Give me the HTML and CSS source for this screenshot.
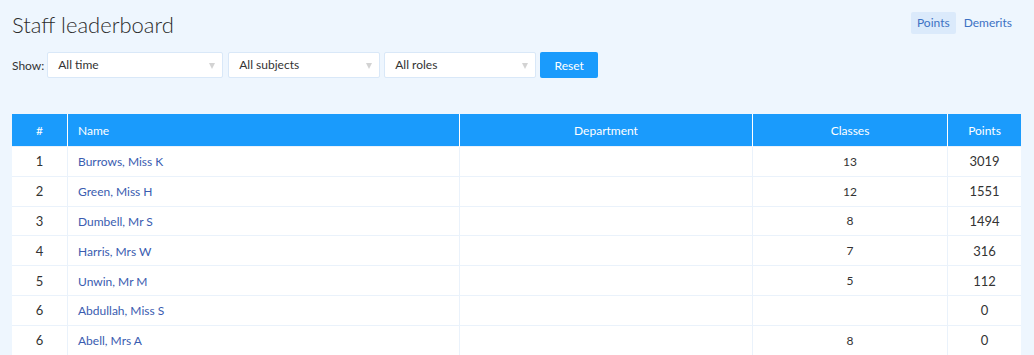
FILE: index.html
```html
<!DOCTYPE html>
<html>
  <head>
    <meta charset="utf-8" />
    <title>Staff leaderboard</title>
    <link rel="stylesheet" href="styles.css">
  </head>
  <body>
    <div class="page">
      <div class="top">
        <h1>Staff leaderboard</h1>
        <div class="tabs">
          <a class="tab active">Points</a>
          <a class="tab">Demerits</a>
        </div>
      </div>

      <div class="filters">
        <span class="show">Show:</span>
        <div class="select s1">All time<span class="arrow"></span></div>
        <div class="select s2">All subjects<span class="arrow"></span></div>
        <div class="select s3">All roles<span class="arrow"></span></div>
        <button class="reset">Reset</button>
      </div>

      <table class="board">
        <thead>
          <tr>
            <th class="c-rank">#</th>
            <th class="c-name">Name</th>
            <th class="c-dept">Department</th>
            <th class="c-classes">Classes</th>
            <th class="c-points">Points</th>
          </tr>
        </thead>
        <tbody>
          <tr><td class="c-rank">1</td><td class="c-name"><a>Burrows, Miss K</a></td><td></td><td class="c-classes">13</td><td class="c-points">3019</td></tr>
          <tr><td class="c-rank">2</td><td class="c-name"><a>Green, Miss H</a></td><td></td><td class="c-classes">12</td><td class="c-points">1551</td></tr>
          <tr><td class="c-rank">3</td><td class="c-name"><a>Dumbell, Mr S</a></td><td></td><td class="c-classes">8</td><td class="c-points">1494</td></tr>
          <tr><td class="c-rank">4</td><td class="c-name"><a>Harris, Mrs W</a></td><td></td><td class="c-classes">7</td><td class="c-points">316</td></tr>
          <tr><td class="c-rank">5</td><td class="c-name"><a>Unwin, Mr M</a></td><td></td><td class="c-classes">5</td><td class="c-points">112</td></tr>
          <tr><td class="c-rank">6</td><td class="c-name"><a>Abdullah, Miss S</a></td><td></td><td class="c-classes"></td><td class="c-points">0</td></tr>
          <tr><td class="c-rank">6</td><td class="c-name"><a>Abell, Mrs A</a></td><td></td><td class="c-classes">8</td><td class="c-points">0</td></tr>
        </tbody>
      </table>
    </div>
  </body>
</html>
```

FILE: styles.css
```css
html,
body {
  margin: 0;
  background: #eef6fe;
  font-family: Lato, "Open Sans", sans-serif;
  color: #333;
}

.page {
  padding: 12px 13px 0 12px;
}

.top {
  display: flex;
  justify-content: space-between;
  align-items: flex-start;
}

h1 {
  margin: 0;
  font-size: 22px;
  font-weight: 300;
  line-height: 26px;
  color: #2b2b2b;
}

.tabs {
  display: flex;
  gap: 2px;
  margin-right: 3px;
}

.tab {
  font-size: 12px;
  color: #3d72c4;
  padding: 4px 6px;
  line-height: 14px;
  border-radius: 2px;
}

.tab.active {
  background: #dbeafb;
}

.filters {
  display: flex;
  align-items: center;
  margin-top: 14px;
  gap: 6px;
}

.show {
  font-size: 12px;
  margin-right: -3px;
}

.select {
  position: relative;
  box-sizing: border-box;
  height: 26px;
  line-height: 24px;
  padding: 0 10px;
  background: #fff;
  border: 1px solid #d9e8f8;
  border-radius: 2px;
  font-size: 12px;
  color: #333;
}

.s1 {
  width: 176px;
}

.s2 {
  width: 152px;
  margin-left: -1px;
}

.s3 {
  width: 152px;
  margin-left: -2px;
}

.arrow {
  position: absolute;
  right: 7px;
  top: 10px;
  width: 0;
  height: 0;
  border-left: 3.5px solid transparent;
  border-right: 3.5px solid transparent;
  border-top: 6px solid #d3d3d3;
}

.reset {
  height: 26px;
  width: 58px;
  margin-left: -2px;
  border: 0;
  border-radius: 2px;
  background: #1a9bfc;
  color: #fff;
  font-family: inherit;
  font-size: 12px;
}

.board {
  width: 100%;
  margin-top: 36px;
  border-collapse: collapse;
  table-layout: fixed;
  background: #fff;
  font-size: 12px;
}

.board th {
  height: 32px;
  padding: 0 10px;
  background: #1a9bfc;
  color: #fff;
  font-weight: 400;
  text-align: center;
  border-left: 1px solid #fff;
}

.board th:first-child {
  border-left: 0;
}

.board td {
  height: 28.8px;
  padding: 0 10px;
  border: 1px solid #eaf2fb;
  text-align: center;
  font-size: 13px;
}

.board td:first-child {
  border-left: 0;
}

.board td:last-child {
  border-right: 0;
}

.c-rank {
  width: 35px;
}

.c-name {
  width: 371px;
}

.board .c-name {
  text-align: left;
}

.c-dept {
  width: 272px;
}

.c-classes {
  width: 174px;
}

.board td.c-classes {
  font-size: 12px;
}

.c-name a {
  color: #3a5cb0;
  font-size: 12px;
}
```
